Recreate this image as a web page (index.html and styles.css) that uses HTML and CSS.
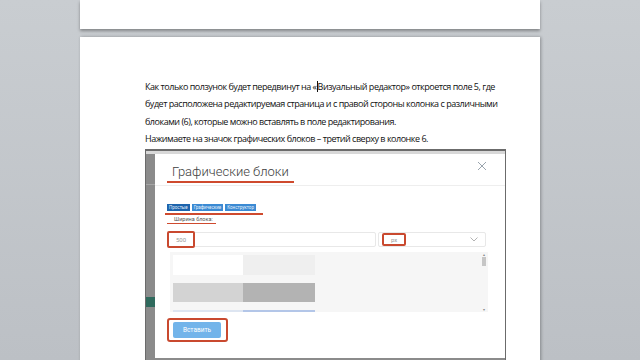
FILE: index.html
```html
<!DOCTYPE html>
<html>
  <head>
    <meta charset="UTF-8">
    <title>Графические блоки</title>
    <link rel="stylesheet" href="styles.css">
  </head>
  <body>
    <div class="page-prev"></div>
    <div class="page">
      <div class="doc-text">
        <p class="para">
          <span class="line">Как только ползунок будет передвинут на «<i class="caret"></i>Визуальный редактор» откроется поле 5, где</span>
          <span class="line">будет расположена редактируемая страница и с правой стороны колонка с различными</span>
          <span class="line">блоками (6), которые можно вставлять в поле редактирования.</span>
        </p>
        <p class="para">
          <span class="line">Нажимаете на значок графических блоков – третий сверху в колонке 6.</span>
        </p>
      </div>

      <!-- screenshot of the editor -->
      <div class="shot">
        <div class="shot-top"><span>ание «План 1.1.3.7.1.1.3%2%»</span></div>
        <div class="shot-body">
          <div class="backdrop">
            <span class="bd-light"></span>
            <span class="bd-teal"></span>
          </div>
          <div class="modal">
            <div class="modal-head">
              <span class="modal-title mark">Графические блоки</span>
              <svg class="close" width="10" height="10" viewBox="0 0 10 10">
                <path d="M1 1 L9 9 M9 1 L1 9" stroke="#9aa4ad" stroke-width="1" fill="none"/>
              </svg>
            </div>
            <div class="modal-body">
              <div class="tabs mark">
                <span class="tab tab-active">Простые</span>
                <span class="tab">Графические</span>
                <span class="tab">Конструктор</span>
              </div>
              <div class="label"><span class="mark">Ширина блока:</span></div>
              <div class="fields">
                <div class="field field-input"><span class="boxed">500</span></div>
                <div class="field field-select">
                  <span class="boxed">px</span>
                  <svg width="8" height="5" viewBox="0 0 8 5">
                    <path d="M0.5 0.5 L4 4 L7.5 0.5" stroke="#a0a0a0" stroke-width="0.8" fill="none"/>
                  </svg>
                </div>
              </div>
              <div class="gallery">
                <div class="tiles">
                  <div class="tile t-white"></div>
                  <div class="tile t-pale"></div>
                  <div class="tile t-mid"></div>
                  <div class="tile t-dark"></div>
                  <div class="tile t-blue1"></div>
                  <div class="tile t-blue2"></div>
                </div>
                <div class="scroll">
                  <span class="arr">▴</span>
                  <span class="thumb"></span>
                  <span class="arr arr-down">▾</span>
                </div>
              </div>
              <div class="actions">
                <span class="boxed boxed-btn"><button class="btn">Вставить</button></span>
              </div>
            </div>
          </div>
        </div>
      </div>
    </div>
  </body>
</html>
```

FILE: styles.css
```css
/* workspace */
html, body {
  margin: 0;
  height: 100%;
}

body {
  width: 640px;
  height: 360px;
  overflow: hidden;
  background: linear-gradient(to bottom, #c9cdd1, #bcc0c5);
  font-family: "Open Sans", sans-serif;
}

.page-prev {
  margin: 0 100px 0 80px;
  width: 460px;
  height: 29px;
  background: #fff;
  box-shadow: 0 2px 3px rgba(0,0,0,0.35);
}

.page {
  margin: 8px 0 0 80px;
  width: 460px;
  height: 330px;
  background: #fff;
  box-shadow: 1px 0 3px rgba(0,0,0,0.3);
  padding-top: 41px;
  box-sizing: border-box;
  overflow: hidden;
}

/* document text */
.doc-text {
  padding-left: 65px;
}

.para {
  margin: 0;
}

.line {
  display: block;
  white-space: nowrap;
  font-size: 9px;
  line-height: 17.4px;
  letter-spacing: -0.48px;
  color: #111;
}

.caret {
  display: inline-block;
  width: 1px;
  height: 11px;
  background: #111;
  vertical-align: -2px;
}

/* embedded screenshot */
.shot {
  margin: 1px 0 0 65px;
  width: 361px;
  height: 220px;
  border: 1px solid #6b6b6b;
  border-top-width: 2px;
  box-sizing: border-box;
  background: #8b8b8b;
}

.shot-top {
  height: 3px;
  overflow: hidden;
  background: #d8d8d8;
}

.shot-top span {
  display: block;
  margin: -15px 0 0 2px;
  font-family: "Roboto", sans-serif;
  font-size: 18px;
  line-height: 18px;
  color: #222;
  white-space: nowrap;
}

.shot-body {
  display: flex;
  height: 100%;
}

.backdrop {
  width: 9px;
  flex: none;
  display: flex;
  flex-direction: column;
}

.bd-light {
  height: 1px;
  margin-top: 30px;
  background: #a5a5a5;
}

.bd-teal {
  height: 10px;
  margin-top: 112px;
  background: #2f6a5d;
}

/* modal */
.modal {
  width: 350px;
  height: 204px;
  background: #fff;
  font-family: "Roboto", sans-serif;
  color: #444;
}

.modal-head {
  height: 32px;
  border-bottom: 1px solid #eeeeee;
  display: flex;
  align-items: center;
  justify-content: space-between;
  padding: 0 18px 0 12px;
  box-sizing: border-box;
}

.mark {
  border-bottom: 2px solid #cf4a2e;
}

.modal-title {
  font-size: 13px;
  font-weight: 300;
  color: #3d3d3d;
  padding: 0 5px 1px 5px;
  line-height: 17px;
  margin-top: 8px;
}

.close {
  margin-top: -6px;
}

.modal-body {
  padding: 18px 15px 0 15px;
  display: flex;
  flex-direction: column;
  align-items: flex-start;
}

.tabs {
  display: flex;
  gap: 2px;
  padding: 0 7px 2px 2px;
  margin-left: -5px;
}

.tab {
  font-size: 4.5px;
  line-height: 7px;
  padding: 0 2px;
  color: #e6f1fb;
  background: #3b8ad3;
}

.tab-active {
  background: #1d64ad;
}

.label {
  margin-top: 1px;
  display: flex;
}

.label span {
  font-size: 5.5px;
  line-height: 7px;
  padding: 0 3px 0 7px;
  margin-left: -3px;
  color: #555;
  border-bottom-width: 1.5px;
}

.fields {
  display: flex;
  gap: 2px;
  margin-top: 8px;
  height: 15px;
}

.field {
  border: 1px solid #e8e8e8;
  border-radius: 2px;
  display: flex;
  align-items: center;
  box-sizing: border-box;
  font-size: 6px;
  color: #999;
}

.field-input {
  width: 208px;
  margin-left: -2px;
}

.field-select {
  width: 108px;
  justify-content: space-between;
  padding-right: 7px;
}

.boxed {
  border: 2px solid #c9492f;
  border-radius: 2px;
  line-height: 7px;
}

.field-input .boxed {
  margin-left: -2px;
  padding: 3px 7px;
}

.field-select .boxed {
  margin-left: 3px;
  padding: 1px 7px;
}

/* gallery of blocks */
.gallery {
  margin-top: 5px;
  height: 60px;
  background: #f6f6f6;
  display: flex;
  justify-content: space-between;
  overflow: hidden;
  width: 318px;
}

.tiles {
  display: grid;
  grid-template-columns: 70px 72px;
  grid-template-rows: 20px 19px 3px;
  row-gap: 8px;
  padding: 3px 0 0 3px;
  align-content: start;
}

.t-white { background: #fff; }
.t-pale { background: #efefef; }
.t-mid { background: #d3d3d3; }
.t-dark { background: #b3b3b3; }
.t-blue1 { background: #dde5f1; }
.t-blue2 { background: #b3c6e8; }

.scroll {
  width: 5px;
  margin-right: 2px;
  display: flex;
  flex-direction: column;
  align-items: center;
  font-size: 4px;
  line-height: 5px;
  color: #888;
}

.thumb {
  width: 4px;
  height: 9px;
  background: #c6c6c6;
}

.arr-down {
  margin-top: auto;
}

/* footer button */
.actions {
  margin-top: 6px;
  display: flex;
}

.boxed-btn {
  margin-left: -3px;
  padding: 2px 5px 2px 4px;
  border-radius: 3px;
}

.btn {
  display: block;
  border: none;
  border-radius: 2px;
  background: #72b4ea;
  color: #fff;
  font-family: "Roboto", sans-serif;
  font-size: 6.5px;
  width: 48px;
  height: 16px;
  padding: 0;
}
```
